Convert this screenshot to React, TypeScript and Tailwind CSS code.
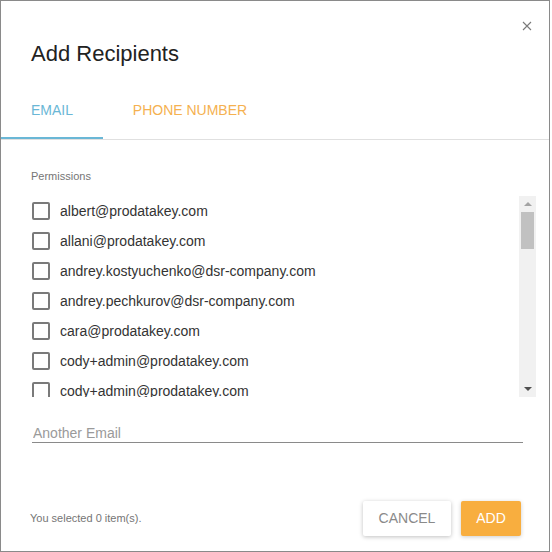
const emails = [
  'albert@prodatakey.com',
  'allani@prodatakey.com',
  'andrey.kostyuchenko@dsr-company.com',
  'andrey.pechkurov@dsr-company.com',
  'cara@prodatakey.com',
  'cody+admin@prodatakey.com',
  'cody+admin@prodatakey.com',
]

function CloseIcon() {
  return (
    <svg width="10" height="10" viewBox="0 0 10 10" fill="none" stroke="#7a7a7a" strokeWidth="1.1">
      <path d="M1 1L9 9M9 1L1 9" />
    </svg>
  )
}

function FakeScrollbar() {
  return (
    <div className="flex w-[17px] flex-col items-center bg-[#f1f1f1]">
      <div className="flex h-[16px] w-full items-center justify-center">
        <div className="h-0 w-0 border-x-[4px] border-b-[4px] border-x-transparent border-b-[#a3a3a3]" />
      </div>
      <div className="h-[37px] w-[13px] bg-[#c1c1c1]" />
      <div className="flex-1" />
      <div className="flex h-[16px] w-full items-center justify-center">
        <div className="h-0 w-0 border-x-[4px] border-t-[4px] border-x-transparent border-t-[#505050]" />
      </div>
    </div>
  )
}

export default function App() {
  return (
    <div className="h-[552px] w-[552px] bg-white font-['Liberation_Sans',Arial,sans-serif]">
      <div className="relative flex h-[552px] w-[550px] flex-col border border-[#8a8a8a] bg-white">
        <button className="absolute right-[16px] top-[19px] flex h-[12px] w-[12px] items-center justify-center" title="Close">
          <CloseIcon />
        </button>

        <h2 className="mt-[40px] px-[30px] text-[22px] leading-[26px] text-[#222]">Add Recipients</h2>

        <div className="mt-[35px] flex border-b border-[#e0e0e0]">
          <div className="w-[102px] border-b-2 border-[#6ab7d6] pb-[19px] text-center text-[14px] leading-[16px] text-[#6ab7d6]">
            EMAIL
          </div>
          <div className="w-[174px] pb-[21px] text-center text-[14px] leading-[16px] text-[#f5b150]">
            PHONE NUMBER
          </div>
        </div>

        <div className="mt-[30px] px-[30px] text-[11px] leading-[13px] text-[#757575]">Permissions</div>

        {/* list is clipped like the scrolled box in the original, scrollbar drawn by hand */}
        <div className="ml-[30px] mr-[13px] mt-[13px] flex h-[201px]">
          <div className="flex-1 overflow-hidden">
            {emails.map((email, i) => (
              <label key={i} className="flex h-[30px] items-center">
                <span className="ml-[1px] h-[18px] w-[18px] rounded-[2px] border-2 border-[#7a7a7a]" />
                <span className="ml-[10px] text-[14px] leading-[16px] text-[#333]">{email}</span>
              </label>
            ))}
          </div>
          <FakeScrollbar />
        </div>

        <div className="ml-[31px] mt-[27px] w-[491px] border-b border-[#8a8a8a]">
          <input
            placeholder="Another Email"
            className="block h-[18px] w-full px-[1px] text-[14px] leading-[18px] text-[#333] outline-none placeholder:text-[#9a9a9a]"
          />
        </div>

        <div className="mt-auto flex items-center justify-between pb-[15px] pl-[29px] pr-[28px]">
          <span className="text-[11px] leading-[13px] text-[#757575]">You selected 0 item(s).</span>
          <div className="flex gap-[10px]">
            <button className="h-[35px] w-[88px] rounded-[2px] bg-white text-[14px] text-[#8a8a8a] shadow-[0_1px_4px_rgba(0,0,0,0.25)]">
              CANCEL
            </button>
            <button className="h-[35px] w-[60px] rounded-[2px] bg-[#f8ae3f] text-[14px] text-white shadow-[0_1px_4px_rgba(0,0,0,0.2)]">
              ADD
            </button>
          </div>
        </div>
      </div>
    </div>
  )
}
